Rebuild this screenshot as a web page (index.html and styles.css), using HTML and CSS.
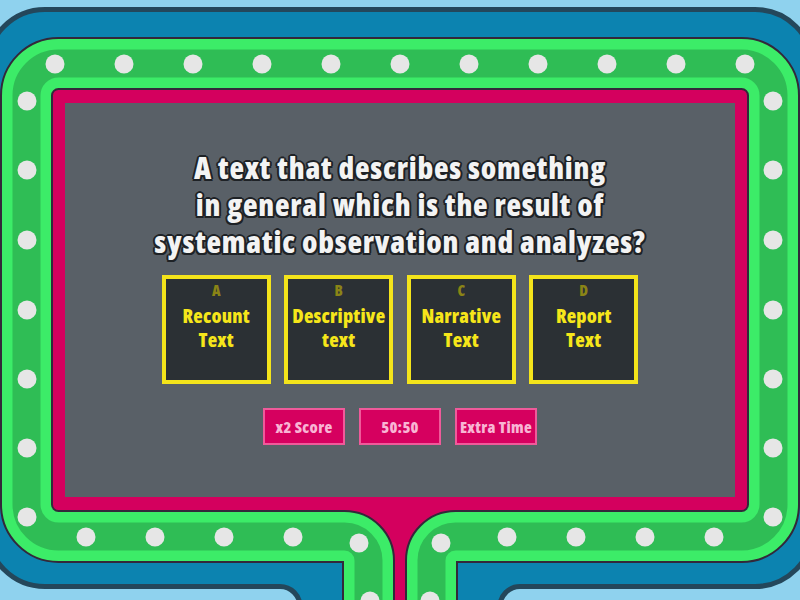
FILE: index.html
```html
<!DOCTYPE html>
<html lang="en">
<head>
<meta charset="utf-8">
<title>Gameshow Quiz</title>
<link rel="stylesheet" href="styles.css">
</head>
<body>
<div class="scene">
  <svg class="frame" width="800" height="600" viewBox="0 0 800 600" xmlns="http://www.w3.org/2000/svg">
    <defs>
      <path id="band" d="M 368.5 620 V 560.5 A 24 24 0 0 0 344.5 536.5 H 58.5 A 32 32 0 0 1 26.5 504.5 V 95.5 A 32 32 0 0 1 58.5 63.5 H 741.5 A 32 32 0 0 1 773.5 95.5 V 504.5 A 32 32 0 0 1 741.5 536.5 H 455.5 A 24 24 0 0 0 431.5 560.5 V 620"/>
    </defs>
    <rect width="800" height="600" fill="#8fd2ee"/>
    <path d="M 45 9.5 H 755 A 58 58 0 0 1 813 67.5 V 528.5 A 58 58 0 0 1 755 586.5 H 520 A 20 20 0 0 0 500 606.5 V 620 H 300 V 606.5 A 20 20 0 0 0 280 586.5 H 45 A 58 58 0 0 1 -13 528.5 V 67.5 A 58 58 0 0 1 45 9.5 Z" fill="#0c83b0" stroke="#24475b" stroke-width="5"/>
    <rect x="45" y="85" width="710" height="440" fill="#d4005e"/>
    <rect x="380" y="480" width="40" height="140" fill="#d4005e"/>
    <g fill="none">
      <use href="#band" stroke="#33283a" stroke-width="53"/>
      <use href="#band" stroke="#3cec68" stroke-width="49"/>
      <use href="#band" stroke="#2fbd55" stroke-width="28"/>
    </g>
    <g fill="#e6e6e6">
      <circle cx="55" cy="64" r="9.5"/><circle cx="124" cy="64" r="9.5"/><circle cx="193" cy="64" r="9.5"/>
      <circle cx="262" cy="64" r="9.5"/><circle cx="331" cy="64" r="9.5"/><circle cx="400" cy="64" r="9.5"/>
      <circle cx="469" cy="64" r="9.5"/><circle cx="538" cy="64" r="9.5"/><circle cx="607" cy="64" r="9.5"/>
      <circle cx="676" cy="64" r="9.5"/><circle cx="745" cy="64" r="9.5"/>
      <circle cx="27" cy="101" r="9.5"/><circle cx="27" cy="170" r="9.5"/><circle cx="27" cy="240" r="9.5"/>
      <circle cx="27" cy="310" r="9.5"/><circle cx="27" cy="379" r="9.5"/><circle cx="27" cy="448" r="9.5"/>
      <circle cx="27" cy="517" r="9.5"/>
      <circle cx="773" cy="101" r="9.5"/><circle cx="773" cy="170" r="9.5"/><circle cx="773" cy="240" r="9.5"/>
      <circle cx="773" cy="310" r="9.5"/><circle cx="773" cy="379" r="9.5"/><circle cx="773" cy="448" r="9.5"/>
      <circle cx="773" cy="517" r="9.5"/>
      <circle cx="86" cy="537" r="9.5"/><circle cx="155" cy="537" r="9.5"/><circle cx="224" cy="537" r="9.5"/>
      <circle cx="293" cy="537" r="9.5"/><circle cx="359" cy="543" r="9.5"/><circle cx="370" cy="601" r="9.5"/>
      <circle cx="441" cy="543" r="9.5"/><circle cx="430" cy="601" r="9.5"/>
      <circle cx="507" cy="537" r="9.5"/><circle cx="576" cy="537" r="9.5"/><circle cx="645" cy="537" r="9.5"/>
      <circle cx="714" cy="537" r="9.5"/>
    </g>
  </svg>

  <main class="screen">
    <h1 class="question">A text that describes something<br>in general which is the result of<br>systematic observation and analyzes?</h1>
    <div class="answers">
      <div class="answer"><span class="letter">A</span><span class="label">Recount<br>Text</span></div>
      <div class="answer"><span class="letter">B</span><span class="label">Descriptive<br>text</span></div>
      <div class="answer"><span class="letter">C</span><span class="label">Narrative<br>Text</span></div>
      <div class="answer"><span class="letter">D</span><span class="label">Report<br>Text</span></div>
    </div>
    <div class="powerups">
      <button class="powerup">x2 Score</button>
      <button class="powerup">50:50</button>
      <button class="powerup">Extra Time</button>
    </div>
  </main>
</div>
</body>
</html>
```

FILE: styles.css
```css
html, body {
  margin: 0;
  padding: 0;
  background: #8fd2ee;
}

.scene {
  width: 800px;
  height: 600px;
  overflow: hidden;
  display: grid;
  font-family: "Open Sans", "DejaVu Sans Condensed", sans-serif;
  font-stretch: 75%;
  font-weight: 800;
}

.frame {
  grid-area: 1 / 1;
  display: block;
}

.screen {
  grid-area: 1 / 1;
  align-self: start;
  justify-self: start;
  margin: 103px 0 0 65px;
  width: 670px;
  height: 394px;
  background: #596067;
  display: flex;
  flex-direction: column;
  align-items: center;
  box-sizing: border-box;
  padding-top: 46px;
}

.question {
  margin: 0;
  font-size: 30px;
  line-height: 37px;
  letter-spacing: 0.8px;
  font-weight: 800;
  text-align: center;
  color: #f3f3f3;
  white-space: nowrap;
  text-shadow:
    2px 0 #1e2226, -2px 0 #1e2226, 0 2px #1e2226, 0 -2px #1e2226,
    1.5px 1.5px #1e2226, -1.5px 1.5px #1e2226, 1.5px -1.5px #1e2226, -1.5px -1.5px #1e2226;
}

.answers {
  display: flex;
  gap: 13.5px;
  margin-top: 15px;
}

.answer {
  width: 109px;
  height: 109px;
  box-sizing: border-box;
  border: 4px solid #f4e41b;
  background: #2b3034;
  display: flex;
  flex-direction: column;
  align-items: center;
  padding-top: 1px;
}

.letter {
  font-size: 15px;
  line-height: 20px;
  color: #8a8416;
}

.label {
  margin-top: 4px;
  font-size: 19.5px;
  line-height: 24px;
  letter-spacing: 0.2px;
  color: #f6e61a;
  text-align: center;
  white-space: nowrap;
}

.powerups {
  display: flex;
  gap: 14px;
  margin-top: 24px;
}

.powerup {
  width: 82px;
  height: 37px;
  box-sizing: border-box;
  border: 2px solid #ef5a9a;
  background: #d6005f;
  color: #f8b5d4;
  font-family: inherit;
  font-stretch: inherit;
  font-weight: 800;
  font-size: 16px;
  letter-spacing: 0.3px;
  padding: 0;
  white-space: nowrap;
}
```
